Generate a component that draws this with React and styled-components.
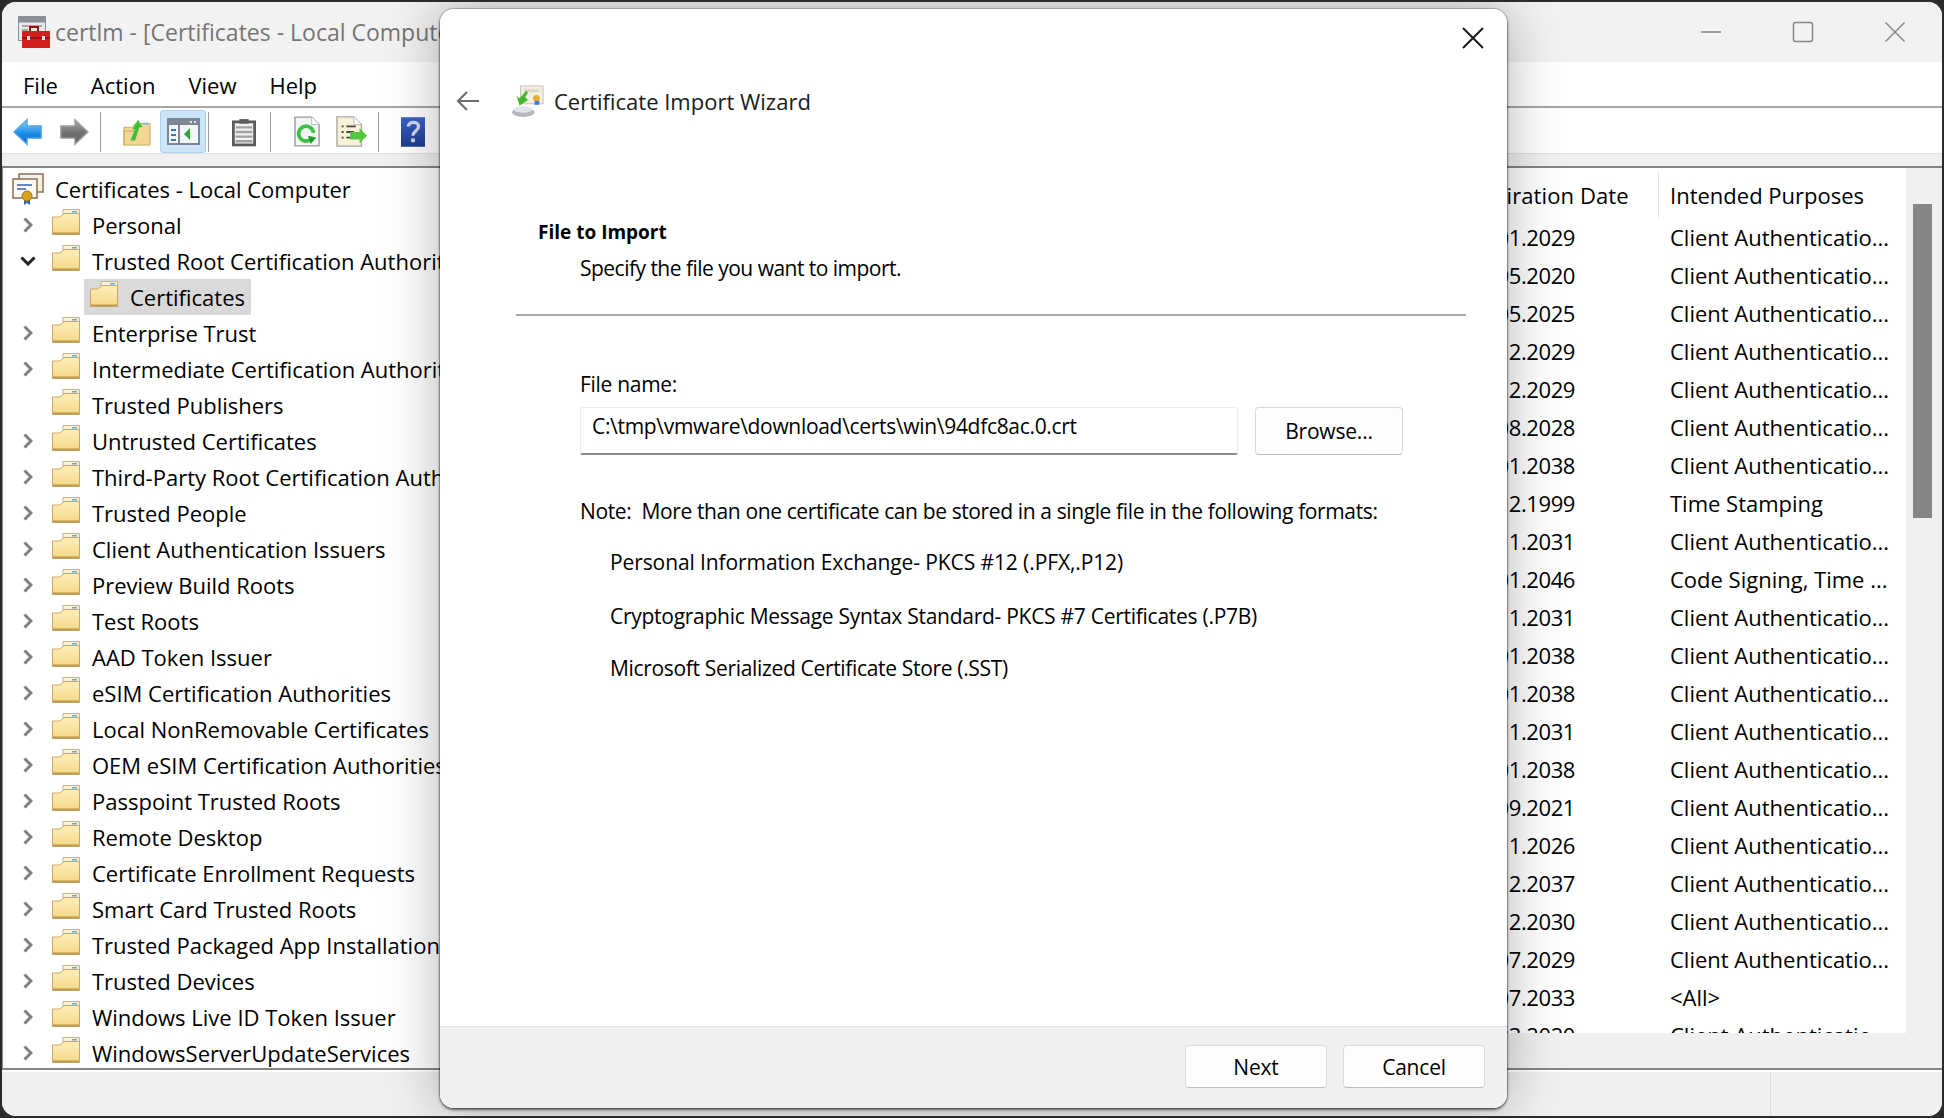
import styled, { createGlobalStyle } from "styled-components";

const GlobalStyle = createGlobalStyle`
  html, body {
    margin: 0;
    padding: 0;
    background: #2b2b2b;
  }
  * {
    box-sizing: border-box;
  }
`;

const Screen = styled.div`
  width: 1944px;
  height: 1118px;
  padding: 2px;
  background: #2b2b2b;
  font-family: "Open Sans", "Noto Sans", sans-serif;
  color: #000;
  overflow: hidden;
`;

const Window = styled.div`
  position: relative;
  width: 100%;
  height: 100%;
  display: flex;
  flex-direction: column;
  background: #f0f0f0;
  border-radius: 14px;
  overflow: hidden;
`;

const TitleBar = styled.div`
  height: 60px;
  flex: none;
  display: flex;
  align-items: center;
  padding-left: 16px;
  background: #f2f2f2;
`;

const TitleText = styled.span`
  margin-left: 5px;
  font-size: 23px;
  color: #757575;
  white-space: nowrap;
`;

const Caption = styled.div`
  margin-left: auto;
  padding-right: 1px;
  display: flex;
  align-items: center;
`;

const CaptionButton = styled.div`
  width: 92px;
  display: flex;
  justify-content: center;
  color: #858585;
`;

const MenuBar = styled.div`
  height: 46px;
  flex: none;
  display: flex;
  align-items: center;
  gap: 33px;
  padding: 2px 0 0 21px;
  background: #fff;
  border-bottom: 2px solid #a6a6a6;
`;

const MenuItem = styled.span`
  font-size: 22px;
`;

const Toolbar = styled.div`
  height: 46px;
  flex: none;
  display: flex;
  align-items: center;
  padding-top: 2px;
  background: #fff;
  border-bottom: 1px solid #e2e2e2;
`;

const ToolButton = styled.div`
  width: ${(p) => p.$width}px;
  height: 43px;
  margin-left: ${(p) => p.$gap || 0}px;
  display: flex;
  align-items: center;
  justify-content: center;
  border-radius: 3px;
  border: 1px solid ${(p) => (p.$active ? "#a9d3f3" : "transparent")};
  background: ${(p) => (p.$active ? "#cce4f7" : "transparent")};
`;

const ToolSeparator = styled.div`
  width: 1px;
  height: 40px;
  margin-left: ${(p) => p.$gap || 0}px;
  background: #9a9a9a;
`;

const Strip = styled.div`
  height: 14px;
  flex: none;
  background: #f0f0f0;
  border-bottom: 2px solid #858585;
`;

const Panes = styled.div`
  flex: 1;
  min-height: 0;
  display: flex;
  background: #fff;
`;

const TreePane = styled.div`
  width: 640px;
  flex: none;
  padding-top: 3px;
  overflow: hidden;
  border-left: 1px solid #8a8a8a;
`;

const TreeRow = styled.div`
  height: 36px;
  display: flex;
  align-items: center;
  padding-left: ${(p) => (p.$level || 0) * 38}px;
  font-size: 22px;
  white-space: nowrap;
`;

const ChevronSlot = styled.div`
  width: 49px;
  flex: none;
  display: flex;
  justify-content: center;
`;

const TreeItem = styled.div`
  height: 36px;
  display: flex;
  align-items: center;
  gap: 12px;
  margin-left: -6px;
  padding: 0 6px;
  background: ${(p) => (p.$selected ? "#d9d9d9" : "transparent")};
`;

const FolderGlyph = styled.svg`
  flex: none;
  margin-bottom: 6px;
`;

const RootRow = styled(TreeRow)`
  gap: 11px;
  padding-left: 9px;
`;

const ListPane = styled.div`
  flex: 1;
  min-width: 0;
  display: flex;
  flex-direction: column;
`;

const ListBody = styled.div`
  flex: 1;
  min-height: 0;
  display: flex;
  overflow: hidden;
`;

const ListColumns = styled.div`
  flex: 1;
  min-width: 0;
  overflow: hidden;
`;

const HeaderRow = styled.div`
  height: 50px;
  padding-top: 4px;
  display: flex;
  align-items: center;
  justify-content: flex-end;
  font-size: 22px;
`;

const DataRow = styled.div`
  height: 38px;
  display: flex;
  align-items: center;
  justify-content: flex-end;
  font-size: 22px;
  white-space: nowrap;
`;

const HeaderCell = styled.div`
  width: 190px;
  height: 100%;
  display: flex;
  align-items: center;
  letter-spacing: 0.1px;
  border-right: 1px solid #e4e4e4;
`;

const DateCell = styled.div`
  width: 190px;
  padding-right: 84px;
  display: flex;
  justify-content: flex-end;
  letter-spacing: -0.4px;
`;

const PurposeCell = styled.div`
  width: 247px;
  padding-left: 11px;
`;

const VerticalScroll = styled.div`
  width: 36px;
  flex: none;
  padding: 36px 10px 0 7px;
  background: #f0f0f0;
`;

const ScrollThumb = styled.div`
  height: 314px;
  background: #868686;
`;

const HorizontalScroll = styled.div`
  height: 35px;
  flex: none;
  padding: 10px 0 9px 0;
  background: #f0f0f0;
`;

const HorizontalThumb = styled.div`
  width: 228px;
  height: 100%;
  background: #868686;
`;

const StatusBar = styled.div`
  height: 48px;
  flex: none;
  display: flex;
  justify-content: flex-end;
  background: #f0f0f0;
  border-top: 2px solid #858585;
  box-shadow: inset 0 2px 0 #fff;
`;

const StatusCell = styled.div`
  width: 172px;
  margin-top: 2px;
  border-left: 1px solid #dcdcdc;
`;

const Dialog = styled.div`
  position: absolute;
  left: 438px;
  top: 7px;
  width: 1067px;
  height: 1099px;
  display: flex;
  flex-direction: column;
  background: #fff;
  border-radius: 14px;
  overflow: hidden;
  font-size: 21px;
`;

const DialogShadow = styled.div`
  position: absolute;
  left: 438px;
  top: 7px;
  width: 1067px;
  height: 1099px;
  border-radius: 14px;
  box-shadow: 0 2px 3px rgba(0, 0, 0, 0.55), 0 0 1px 1px rgba(0, 0, 0, 0.25),
    0 0 55px rgba(0, 0, 0, 0.3);
`;

const CloseRow = styled.div`
  height: 57px;
  flex: none;
  display: flex;
  align-items: center;
  justify-content: flex-end;
  padding-right: 22px;
  color: #1a1a1a;
`;

const WizardHeader = styled.div`
  height: 70px;
  flex: none;
  display: flex;
  align-items: center;
  padding-left: 16px;
`;

const WizardTitle = styled.span`
  margin-left: 10px;
  font-size: 22px;
  color: #1a1a1a;
`;

const BackButton = styled.div`
  width: 24px;
  margin-right: 32px;
  display: flex;
  color: #6f6f6f;
`;

const PageTitle = styled.div`
  margin: 81px 0 0 98px;
  line-height: 30px;
  font-size: 19px;
  font-weight: 700;
`;

const PageSubtitle = styled.div`
  margin: 6px 0 0 140px;
  line-height: 30px;
  letter-spacing: -0.52px;
`;

const Divider = styled.div`
  height: 2px;
  margin: 31px 41px 0 76px;
  background: #a8a8a8;
`;

const Form = styled.div`
  margin-left: 140px;
  display: flex;
  flex-direction: column;
`;

const FieldLabel = styled.div`
  margin-top: 53px;
  line-height: 30px;
  letter-spacing: -0.3px;
`;

const FieldRow = styled.div`
  margin-top: 8px;
  display: flex;
  gap: 17px;
`;

const FileInput = styled.div`
  width: 658px;
  height: 48px;
  padding: 3px 0 0 11px;
  line-height: 30px;
  letter-spacing: -0.31px;
  border: 1px solid #ececec;
  border-bottom: 2px solid #8d8d8d;
  border-radius: 2px;
`;

const PushButton = styled.div`
  width: ${(p) => p.$width}px;
  height: ${(p) => p.$height}px;
  display: flex;
  align-items: center;
  justify-content: center;
  background: #fdfdfd;
  border: 1px solid #dadada;
  border-bottom-color: #bdbdbd;
  border-radius: 4px;
  font-size: 21px;
  letter-spacing: -0.2px;
`;

const Note = styled.div`
  margin-top: 41px;
  line-height: 30px;
  letter-spacing: -0.38px;
  white-space: pre;
`;

const Format = styled.div`
  margin: ${(p) => p.$top}px 0 0 30px;
  line-height: 30px;
  letter-spacing: ${(p) => p.$spacing}px;
`;

const DialogFooter = styled.div`
  height: 82px;
  margin-top: auto;
  flex: none;
  display: flex;
  align-items: center;
  justify-content: flex-end;
  gap: 16px;
  padding: 0 22px 2px 0;
  background: #f0f0f0;
  border-top: 1px solid #e3e3e3;
`;

function BackArrow() {
  return (
    <svg width="32" height="30" viewBox="0 0 34 32">
      <defs>
        <linearGradient id="blueArrow" x1="0" y1="0" x2="0" y2="1">
          <stop offset="0" stopColor="#8fd2fb" />
          <stop offset="0.55" stopColor="#1d8fe8" />
          <stop offset="1" stopColor="#0b5fc0" />
        </linearGradient>
      </defs>
      <path d="M1 16 L16 2 V9 H32 V23 H16 V30 Z" fill="url(#blueArrow)" stroke="#5aa6e4" strokeWidth="1.5" />
    </svg>
  );
}

function ForwardArrow() {
  return (
    <svg width="32" height="30" viewBox="0 0 34 32">
      <defs>
        <linearGradient id="grayArrow" x1="0" y1="0" x2="0" y2="1">
          <stop offset="0" stopColor="#a8a8a8" />
          <stop offset="0.55" stopColor="#707070" />
          <stop offset="1" stopColor="#606060" />
        </linearGradient>
      </defs>
      <path d="M33 16 L18 2 V9 H2 V23 H18 V30 Z" fill="url(#grayArrow)" stroke="#a6a6a6" strokeWidth="1.5" />
    </svg>
  );
}

function UpFolder() {
  return (
    <svg width="30" height="30" viewBox="0 0 30 30">
      <path d="M1 10 H10 L13 6 H29 V29 H1 Z" fill="#f2d794" stroke="#c8a561" />
      <path d="M1 29 V14 H12 L17 8" fill="none" stroke="#c8a561" />
      <rect x="21" y="5" width="6" height="2" fill="#6fb4ea" />
      <path d="M8 24 L13 12 H10 L16 2 L21 10 H17.5 L13 24 Z" fill="#39c233" />
    </svg>
  );
}

function ConsoleTree() {
  return (
    <svg width="33" height="27" viewBox="0 0 33 27">
      <rect x="1" y="1" width="31" height="25" fill="#f2f6f9" stroke="#7c8793" strokeWidth="2" />
      <rect x="1" y="1" width="31" height="6" fill="#7c8793" />
      <rect x="23" y="3" width="2" height="2" fill="#e6e6e6" />
      <rect x="27" y="3" width="2" height="2" fill="#e6e6e6" />
      <path d="M12 7 V26" stroke="#7c8793" strokeWidth="2" />
      <rect x="4" y="11" width="5" height="2" fill="#3c78b5" />
      <rect x="4" y="16" width="5" height="2" fill="#3c78b5" />
      <rect x="4" y="21" width="5" height="2" fill="#3c78b5" />
      <path d="M17 16 L23 10 V22 Z" fill="#30a838" />
    </svg>
  );
}

function Clipboard() {
  return (
    <svg width="26" height="30" viewBox="0 0 26 30">
      <rect x="1.5" y="4" width="23" height="25" fill="#f2f2f2" stroke="#5c5c5c" strokeWidth="3" />
      <rect x="8" y="1" width="10" height="5" fill="#5c5c5c" />
      <path d="M4 10 H22 M4 15 H22 M4 20 H22 M4 25 H22" stroke="#a0a0a0" strokeWidth="2.5" />
    </svg>
  );
}

function RefreshDoc() {
  return (
    <svg width="28" height="33" viewBox="0 0 28 33">
      <path d="M1 1 H19 L27 9 V32 H1 Z" fill="#f4f4f4" stroke="#9a9a9a" strokeWidth="1.5" />
      <path d="M19 1 V9 H27" fill="#fff" stroke="#b8b8b8" />
      <path d="M18 25 A8 8 0 1 1 21 18" fill="none" stroke="#3cc043" strokeWidth="4" />
      <path d="M15 21 L24 23 L18 30 Z" fill="#1f9f2c" />
    </svg>
  );
}

function ExportDoc() {
  return (
    <svg width="34" height="33" viewBox="0 0 34 33">
      <path d="M1 1 H19 L27 9 V32 H1 Z" fill="#f8f2d8" stroke="#a8a8a8" strokeWidth="1.5" />
      <path d="M19 1 V9 H27" fill="#fff" stroke="#b8b8b8" />
      <path d="M6 11 H8 M11 11 H21 M6 17 H8 M11 17 H19 M6 23 H8 M11 23 H16" stroke="#444" strokeWidth="2" />
      <path d="M33 21 L25 13 V17 H15 V25 H25 V29 Z" fill="#55c63f" />
    </svg>
  );
}

function HelpBook() {
  return (
    <svg width="26" height="32" viewBox="0 0 26 32">
      <defs>
        <linearGradient id="helpBlue" x1="0" y1="0" x2="0" y2="1">
          <stop offset="0" stopColor="#3c62c8" />
          <stop offset="1" stopColor="#1f3c8a" />
        </linearGradient>
      </defs>
      <rect width="26" height="32" fill="url(#helpBlue)" />
      <path d="M8 10 C8 4 19 4 19 10 C19 15 13 15 13 20" fill="none" stroke="#cfd8f2" strokeWidth="3.5" />
      <rect x="11" y="23" width="4" height="4" fill="#cfd8f2" />
    </svg>
  );
}

function AppIcon() {
  return (
    <svg width="32" height="32" viewBox="0 0 32 32">
      <rect x="0.5" y="0.5" width="27" height="24" fill="#e9e9e9" stroke="#8a8f96" />
      <rect x="0.5" y="0.5" width="27" height="6" fill="#8a8f96" />
      <path d="M4 10 H24 M4 14 H10" stroke="#a8a8a8" strokeWidth="2" />
      <path d="M12 15 V11 H20 V15" fill="none" stroke="#8d1414" strokeWidth="2" />
      <rect x="4" y="15" width="28" height="17" fill="#d41f1f" />
      <rect x="4" y="21" width="28" height="2" fill="#9a1212" />
      <rect x="9" y="20" width="3" height="4" fill="#e8e8e8" />
      <rect x="24" y="20" width="3" height="4" fill="#e8e8e8" />
    </svg>
  );
}

function RootIcon() {
  return (
    <svg width="32" height="32" viewBox="0 0 32 32">
      <rect x="7" y="1" width="24" height="18" fill="#f5f1e6" stroke="#8a6d4c" strokeWidth="1.5" />
      <rect x="1" y="6" width="24" height="19" fill="#fbfaf4" stroke="#8a6d4c" strokeWidth="1.5" />
      <path d="M5 12 H20 M5 16 H14" stroke="#6c86c4" strokeWidth="2" />
      <path d="M12 26 V32 L15 30 L18 32 V26 Z" fill="#2868c8" />
      <circle cx="15" cy="23" r="5" fill="#dba21f" stroke="#a9770f" />
    </svg>
  );
}

function FolderIcon() {
  return (
    <FolderGlyph width="28" height="26" viewBox="0 0 28 26">
      <defs>
        <linearGradient id="folderFace" x1="0" y1="0" x2="0" y2="1">
          <stop offset="0" stopColor="#fcefbd" />
          <stop offset="1" stopColor="#f5d784" />
        </linearGradient>
      </defs>
      <path d="M11 0.5 H27.5 V8 H11 Z" fill="#f6f2e4" stroke="#cbb27a" />
      <rect x="20" y="2" width="5" height="1.5" fill="#5aa9e6" />
      <path d="M0.5 8 L8 8 L12 4.5 H27.5 V25.5 H0.5 Z" fill="url(#folderFace)" stroke="#c9a762" />
      <rect x="1" y="23.5" width="26" height="2" fill="#b99a55" />
    </FolderGlyph>
  );
}

function WizardIcon() {
  return (
    <svg width="32" height="32" viewBox="0 0 34 34">
      <rect x="9" y="1" width="24" height="19" fill="#f3eee2" stroke="#c9bfae" />
      <path d="M13 6 H29" stroke="#dcd5c6" strokeWidth="3" />
      <circle cx="26" cy="14" r="3.5" fill="#e8a92c" />
      <rect x="24" y="17" width="5" height="4" fill="#2f7fe0" />
      <ellipse cx="12" cy="29" rx="12" ry="5" fill="#b4b8bc" />
      <ellipse cx="12" cy="26" rx="10" ry="3.5" fill="#e2e4e6" />
      <path d="M15 6 L17 8 L14 13 L17 16 L8 22 L5 12 L8 14 Z" fill="#49b92f" />
    </svg>
  );
}

function Chevron({ open }) {
  if (open) {
    return (
      <svg width="16" height="10" viewBox="0 0 16 10">
        <path d="M1.5 1.5 L8 8 L14.5 1.5" fill="none" stroke="#222" strokeWidth="3" />
      </svg>
    );
  }
  return (
    <svg width="10" height="16" viewBox="0 0 10 16">
      <path d="M1.5 1.5 L8 8 L1.5 14.5" fill="none" stroke="#7f7f7f" strokeWidth="3" />
    </svg>
  );
}

const treeRows = [
  { name: "Personal", chevron: "closed" },
  { name: "Trusted Root Certification Authorities", chevron: "open" },
  { name: "Certificates", level: 1, selected: true },
  { name: "Enterprise Trust", chevron: "closed" },
  { name: "Intermediate Certification Authorities", chevron: "closed" },
  { name: "Trusted Publishers" },
  { name: "Untrusted Certificates", chevron: "closed" },
  { name: "Third-Party Root Certification Authorities", chevron: "closed" },
  { name: "Trusted People", chevron: "closed" },
  { name: "Client Authentication Issuers", chevron: "closed" },
  { name: "Preview Build Roots", chevron: "closed" },
  { name: "Test Roots", chevron: "closed" },
  { name: "AAD Token Issuer", chevron: "closed" },
  { name: "eSIM Certification Authorities", chevron: "closed" },
  { name: "Local NonRemovable Certificates", chevron: "closed" },
  { name: "OEM eSIM Certification Authorities", chevron: "closed" },
  { name: "Passpoint Trusted Roots", chevron: "closed" },
  { name: "Remote Desktop", chevron: "closed" },
  { name: "Certificate Enrollment Requests", chevron: "closed" },
  { name: "Smart Card Trusted Roots", chevron: "closed" },
  { name: "Trusted Packaged App Installation Authorities", chevron: "closed" },
  { name: "Trusted Devices", chevron: "closed" },
  { name: "Windows Live ID Token Issuer", chevron: "closed" },
  { name: "WindowsServerUpdateServices", chevron: "closed" },
];

const client = "Client Authenticatio...";

const listRows = [
  ["01.01.2029", client],
  ["12.05.2020", client],
  ["12.05.2025", client],
  ["31.12.2029", client],
  ["31.12.2029", client],
  ["01.08.2028", client],
  ["15.01.2038", client],
  ["30.12.1999", "Time Stamping"],
  ["09.11.2031", client],
  ["18.01.2046", "Code Signing, Time ..."],
  ["09.11.2031", client],
  ["15.01.2038", client],
  ["18.01.2038", client],
  ["09.11.2031", client],
  ["15.01.2038", client],
  ["22.09.2021", client],
  ["10.11.2026", client],
  ["31.12.2037", client],
  ["31.12.2030", client],
  ["28.07.2029", client],
  ["31.07.2033", "<All>"],
  ["23.03.2020", client],
];

export default function App() {
  return (
    <Screen>
      <GlobalStyle />
      <Window>
        <TitleBar>
          <AppIcon />
          <TitleText>
            certlm - [Certificates - Local Computer\Trusted Root Certification
            Authorities\Certificates]
          </TitleText>
          <Caption>
            <CaptionButton>
              <svg width="22" height="22" viewBox="0 0 22 22">
                <path d="M1 11 H21" stroke="currentColor" strokeWidth="1.5" />
              </svg>
            </CaptionButton>
            <CaptionButton>
              <svg width="22" height="22" viewBox="0 0 22 22">
                <rect x="1.5" y="1.5" width="19" height="19" rx="2" fill="none" stroke="currentColor" strokeWidth="1.5" />
              </svg>
            </CaptionButton>
            <CaptionButton>
              <svg width="22" height="22" viewBox="0 0 22 22">
                <path d="M1.5 1.5 L20.5 20.5 M20.5 1.5 L1.5 20.5" stroke="currentColor" strokeWidth="1.5" />
              </svg>
            </CaptionButton>
          </Caption>
        </TitleBar>
        <MenuBar>
          <MenuItem>File</MenuItem>
          <MenuItem>Action</MenuItem>
          <MenuItem>View</MenuItem>
          <MenuItem>Help</MenuItem>
        </MenuBar>
        <Toolbar>
          <ToolButton $width={32} $gap={10}><BackArrow /></ToolButton>
          <ToolButton $width={32} $gap={14}><ForwardArrow /></ToolButton>
          <ToolSeparator $gap={10} />
          <ToolButton $width={30} $gap={21}><UpFolder /></ToolButton>
          <ToolButton $width={46} $gap={8} $active><ConsoleTree /></ToolButton>
          <ToolSeparator $gap={2} />
          <ToolButton $width={26} $gap={22}><Clipboard /></ToolButton>
          <ToolSeparator $gap={13} />
          <ToolButton $width={28} $gap={22}><RefreshDoc /></ToolButton>
          <ToolButton $width={34} $gap={14}><ExportDoc /></ToolButton>
          <ToolSeparator $gap={9} />
          <ToolButton $width={26} $gap={21}><HelpBook /></ToolButton>
        </Toolbar>
        <Strip />
        <Panes>
          <TreePane>
            <RootRow>
              <RootIcon />
              <span>Certificates - Local Computer</span>
            </RootRow>
            {treeRows.map((row) => (
              <TreeRow key={row.name} $level={row.level}>
                <ChevronSlot>
                  {row.chevron && <Chevron open={row.chevron === "open"} />}
                </ChevronSlot>
                <TreeItem $selected={row.selected}>
                  <FolderIcon />
                  <span>{row.name}</span>
                </TreeItem>
              </TreeRow>
            ))}
          </TreePane>
          <ListPane>
            <ListBody>
              <ListColumns>
                <HeaderRow>
                  <HeaderCell>Expiration Date</HeaderCell>
                  <PurposeCell>Intended Purposes</PurposeCell>
                </HeaderRow>
                {listRows.map((row, i) => (
                  <DataRow key={i}>
                    <DateCell>{row[0]}</DateCell>
                    <PurposeCell>{row[1]}</PurposeCell>
                  </DataRow>
                ))}
              </ListColumns>
              <VerticalScroll>
                <ScrollThumb />
              </VerticalScroll>
            </ListBody>
            <HorizontalScroll>
              <HorizontalThumb />
            </HorizontalScroll>
          </ListPane>
        </Panes>
        <StatusBar>
          <StatusCell />
        </StatusBar>
        <DialogShadow />
        <Dialog>
          <CloseRow>
            <svg width="24" height="24" viewBox="0 0 24 24">
              <path d="M2 2 L22 22 M22 2 L2 22" stroke="currentColor" strokeWidth="2" />
            </svg>
          </CloseRow>
          <WizardHeader>
            <BackButton>
              <svg width="24" height="22" viewBox="0 0 24 22">
                <path d="M23 11 H2 M11 2 L2 11 L11 20" fill="none" stroke="currentColor" strokeWidth="2.2" />
              </svg>
            </BackButton>
            <WizardIcon />
            <WizardTitle>Certificate Import Wizard</WizardTitle>
          </WizardHeader>
          <PageTitle>File to Import</PageTitle>
          <PageSubtitle>Specify the file you want to import.</PageSubtitle>
          <Divider />
          <Form>
            <FieldLabel>File name:</FieldLabel>
            <FieldRow>
              <FileInput>C:\tmp\vmware\download\certs\win\94dfc8ac.0.crt</FileInput>
              <PushButton $width={148} $height={48}>Browse...</PushButton>
            </FieldRow>
            <Note>Note:  More than one certificate can be stored in a single file in the following formats:</Note>
            <Format $top={21} $spacing={-0.1}>Personal Information Exchange- PKCS #12 (.PFX,.P12)</Format>
            <Format $top={24} $spacing={-0.27}>Cryptographic Message Syntax Standard- PKCS #7 Certificates (.P7B)</Format>
            <Format $top={22} $spacing={-0.33}>Microsoft Serialized Certificate Store (.SST)</Format>
          </Form>
          <DialogFooter>
            <PushButton $width={142} $height={43}>Next</PushButton>
            <PushButton $width={142} $height={43}>Cancel</PushButton>
          </DialogFooter>
        </Dialog>
      </Window>
    </Screen>
  );
}
